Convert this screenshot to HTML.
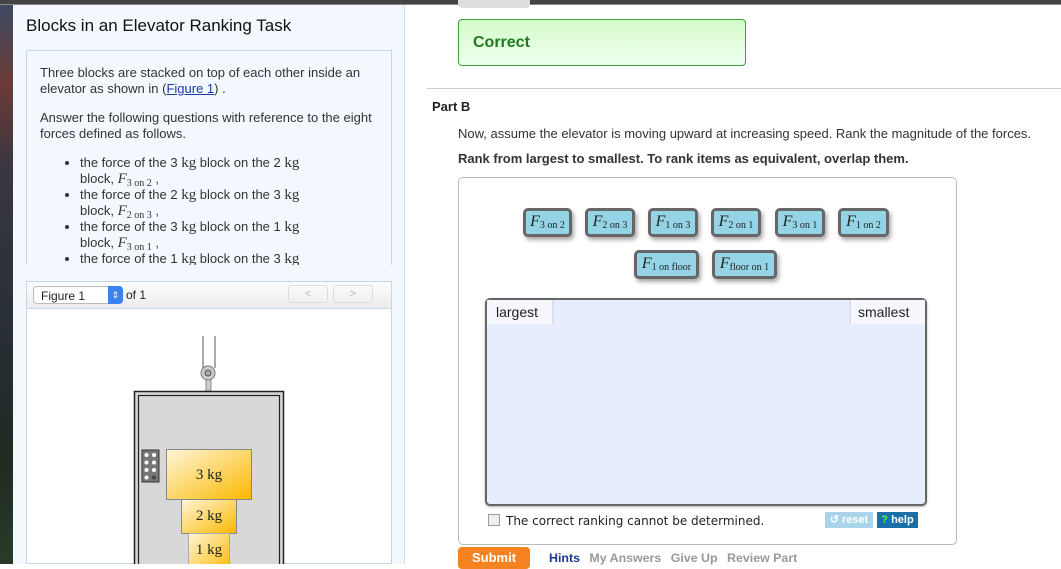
<!DOCTYPE html>
<html><head><meta charset="utf-8"><style>
*{box-sizing:border-box;margin:0;padding:0}
body{width:1061px;height:564px;overflow:hidden;position:relative;font-family:"Liberation Sans",Arial,sans-serif;background:#fff;color:#222}
.abs{position:absolute}
.m{font-family:"Liberation Serif",serif;font-size:15px}
.s{font-family:"Liberation Serif",serif;font-size:10px;position:relative;top:3px;line-height:0}
.chip{position:absolute;height:29px;background:#94d4e6;border:3px solid #666;border-radius:5px;box-shadow:2px 3px 4px rgba(0,0,0,.35);font-family:"Liberation Serif",serif;font-style:italic;font-size:16px;text-align:center;line-height:22px;color:#222}
.chip sub{font-style:normal;font-size:10px;vertical-align:-2px;line-height:0}
li{margin-left:18px;line-height:16px}
</style></head><body>
<div class="abs" style="left:0;top:0;width:13px;height:564px;background:linear-gradient(180deg,#3b4a63 0%,#6a3a36 15%,#3a3640 30%,#2a3038 55%,#1f2a22 80%,#2a3a2a 100%)"></div>
<div class="abs" style="left:0;top:0;width:1061px;height:5px;background:#444;border-bottom:1px solid #888"></div>
<div class="abs" style="left:13px;top:5px;width:392px;height:559px;background:#f3f8fe;border-right:1px solid #d0dcea"></div>
<div class="abs" style="left:26px;top:16px;font-size:17px;color:#111">Blocks in an Elevator Ranking Task</div>
<div class="abs" style="left:26px;top:50px;width:366px;height:215px;border:1px solid #c5d6e6;border-bottom:none;overflow:hidden;font-size:13px;line-height:16px;color:#333;padding:14px 0 0 13px">
<p>Three blocks are stacked on top of each other inside an<br>elevator as shown in (<span style="color:#1a3aa8;text-decoration:underline">Figure 1</span>) .</p>
<p style="margin-top:13px">Answer the following questions with reference to the eight<br>forces defined as follows.</p>
<ul style="margin-top:13px;margin-left:22px;font-size:13px">
<li>the force of the 3 <span class="m">kg</span> block on the 2 <span class="m">kg</span><br>block, <span class="m"><i>F</i></span><span class="s">3 on 2</span> ,</li>
<li>the force of the 2 <span class="m">kg</span> block on the 3 <span class="m">kg</span><br>block, <span class="m"><i>F</i></span><span class="s">2 on 3</span> ,</li>
<li>the force of the 3 <span class="m">kg</span> block on the 1 <span class="m">kg</span><br>block, <span class="m"><i>F</i></span><span class="s">3 on 1</span> ,</li>
<li>the force of the 1 <span class="m">kg</span> block on the 3 <span class="m">kg</span></li>
</ul></div>
<div class="abs" style="left:26px;top:281px;width:366px;height:283px;border:1px solid #c5d6e6;background:#fff"></div>
<div class="abs" style="left:27px;top:282px;width:364px;height:27px;background:linear-gradient(#fdfdfd,#ececec);border-bottom:1px solid #c5d6e6"></div>
<div class="abs" style="left:33px;top:286px;width:90px;height:18px;border:1px solid #bbb;border-radius:4px;background:#fff;font-size:12px;padding:2px 0 0 7px">Figure 1</div>
<div class="abs" style="left:108px;top:286px;width:15px;height:18px;background:#3b82f0;border-radius:0 4px 4px 0;color:#fff;font-size:9px;text-align:center;line-height:18px">⇕</div>
<div class="abs" style="left:126px;top:288px;font-size:12px">of 1</div>
<div class="abs" style="left:288px;top:285px;width:40px;height:18px;border:1px solid #ddd;border-radius:3px;color:#bbb;font-size:11px;text-align:center;line-height:16px">&lt;</div>
<div class="abs" style="left:333px;top:285px;width:40px;height:18px;border:1px solid #ddd;border-radius:3px;color:#bbb;font-size:11px;text-align:center;line-height:16px">&gt;</div>
<svg class="abs" style="left:0;top:0" width="410" height="564">
<line x1="203" y1="336" x2="203" y2="368" stroke="#555" stroke-width="1"/><line x1="215" y1="336" x2="215" y2="368" stroke="#555" stroke-width="1"/>
<rect x="206" y="375" width="5" height="16" fill="#ccc" stroke="#777" stroke-width=".8"/>
<circle cx="208" cy="373" r="7" fill="#ccc" stroke="#777"/><circle cx="208" cy="373" r="3" fill="#aaa" stroke="#555"/>
<rect x="134.5" y="391.5" width="149" height="180" fill="#d8d8d8" stroke="#222" stroke-width="1.5"/>
<rect x="138.5" y="395.5" width="141" height="180" fill="none" stroke="#222" stroke-width="1.2"/>
<rect x="142" y="450" width="17" height="32" fill="#777" stroke="#333"/>
<g fill="#fff"><circle cx="146.5" cy="455" r="2"/><circle cx="154" cy="455" r="2"/><circle cx="146.5" cy="462.5" r="2"/><circle cx="154" cy="462.5" r="2"/><circle cx="146.5" cy="470" r="2"/><circle cx="154" cy="470" r="2"/><circle cx="146.5" cy="477.5" r="2"/></g><circle cx="154" cy="477.5" r="2" fill="#444"/>
<defs><linearGradient id="g" x1="0" y1="0" x2="1" y2="1"><stop offset="0" stop-color="#fff6d8"/><stop offset="1" stop-color="#fbb800"/></linearGradient></defs>
<rect x="166.5" y="449.5" width="85" height="50" fill="url(#g)" stroke="#888"/>
<rect x="181.5" y="499.5" width="55" height="34" fill="url(#g)" stroke="#888"/>
<rect x="188.5" y="533.5" width="41" height="40" fill="url(#g)" stroke="#aaa"/>
<g font-family="Liberation Serif" font-size="15" fill="#222" text-anchor="middle"><text x="209" y="479">3 kg</text><text x="209" y="520">2 kg</text><text x="209" y="554">1 kg</text></g>
</svg>
<div class="abs" style="left:458px;top:0;width:72px;height:8px;background:#ddd;border-radius:0 0 4px 4px"></div>
<div class="abs" style="left:458px;top:19px;width:288px;height:47px;border:1px solid #3aa23a;border-radius:4px;background:linear-gradient(#d4fbc8,#effff0);font-weight:bold;color:#1f7a1f;font-size:16px;padding:14px 0 0 14px">Correct</div>
<div class="abs" style="left:427px;top:88px;width:634px;height:1px;background:#ccc"></div>
<div class="abs" style="left:432px;top:99px;font-size:13px;font-weight:bold;color:#222">Part B</div>
<div class="abs" style="left:458px;top:126px;font-size:13px;color:#333">Now, assume the elevator is moving upward at increasing speed. Rank the magnitude of the forces.</div>
<div class="abs" style="left:458px;top:151px;font-size:13px;font-weight:bold;color:#333">Rank from largest to smallest. To rank items as equivalent, overlap them.</div>
<div class="abs" style="left:458px;top:177px;width:499px;height:368px;border:1px solid #bbb;border-radius:5px"></div>
<div class="chip" style="left:523px;top:208px;width:49px">F<sub>3 on 2</sub></div>
<div class="chip" style="left:585px;top:208px;width:50px">F<sub>2 on 3</sub></div>
<div class="chip" style="left:648px;top:208px;width:50px">F<sub>1 on 3</sub></div>
<div class="chip" style="left:711px;top:208px;width:50px">F<sub>2 on 1</sub></div>
<div class="chip" style="left:775px;top:208px;width:50px">F<sub>3 on 1</sub></div>
<div class="chip" style="left:838px;top:208px;width:51px">F<sub>1 on 2</sub></div>
<div class="chip" style="left:634px;top:250px;width:65px">F<sub>1 on floor</sub></div>
<div class="chip" style="left:712px;top:250px;width:65px">F<sub>floor on 1</sub></div>
<div class="abs" style="left:485px;top:298px;width:442px;height:208px;border:2px solid #666;border-radius:5px;background:#e6edfc;box-shadow:0 1px 2px rgba(0,0,0,.3)"></div>
<div class="abs" style="left:487px;top:300px;width:67px;height:24px;background:#f5f7fc;border-right:2px solid #dde;font-size:14px;padding:4px 0 0 9px">largest</div>
<div class="abs" style="left:849px;top:300px;width:76px;height:24px;background:#f5f7fc;border-left:2px solid #dde;font-size:14px;padding:4px 0 0 7px">smallest</div>
<div class="abs" style="left:488px;top:514px;width:12px;height:12px;border:1px solid #999;background:#eee"></div>
<div class="abs" style="left:506px;top:514px;font-family:'DejaVu Sans',sans-serif;font-size:12px;color:#222">The correct ranking cannot be determined.</div>
<div class="abs" style="left:825px;top:512px;width:48px;height:16px;background:#a8d4ec;color:#fff;font-size:11px;font-weight:bold;text-align:center;line-height:16px">↺ reset</div>
<div class="abs" style="left:877px;top:512px;width:41px;height:16px;background:#1a6fa8;color:#fff;font-size:11px;font-weight:bold;text-align:center;line-height:16px"><span style="color:#4f4">?</span> help</div>
<div class="abs" style="left:458px;top:547px;width:72px;height:22px;background:#f58220;border-radius:4px;color:#fff;font-weight:bold;font-size:13px;text-align:center;line-height:22px">Submit</div>
<div class="abs" style="left:549px;top:551px;font-size:12.4px;font-weight:bold;color:#1a3a9a">Hints <span style="color:#999;margin-left:6px">My Answers</span> <span style="color:#999;margin-left:6px">Give Up</span> <span style="color:#999;margin-left:6px">Review Part</span></div>
</body></html>
